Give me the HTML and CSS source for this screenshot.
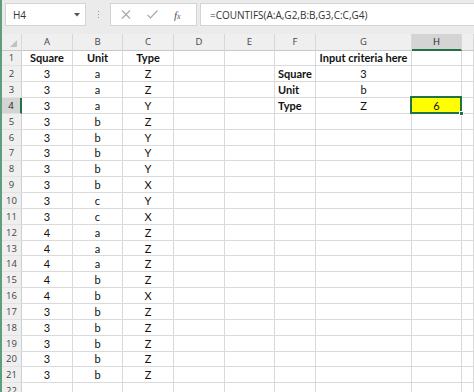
FILE: index.html
```html
<!DOCTYPE html>
<html lang="en">
<head>
  <meta charset="UTF-8" />
  <title>COUNTIFS</title>
  <link rel="stylesheet" href="styles.css">
</head>
<body>
  <div class="stripe"></div>
  <div class="app">
    <div class="formula-bar">
      <div class="name-box">
        <span>H4</span>
        <svg class="arrow" width="6" height="4" viewBox="0 0 6 4"><path d="M0 0h6L3 3.5z" fill="#555"/></svg>
      </div>
      <div class="dots"><i></i><i></i><i></i></div>
      <div class="fx-box">
        <svg width="10" height="9" viewBox="0 0 10 9"><path d="M1 0.5l8 8M9 0.5l-8 8" stroke="#a6a6a6" stroke-width="1.1" fill="none"/></svg>
        <svg width="11" height="9" viewBox="0 0 11 9"><path d="M0.5 4.8l3 3.2 7-7.5" stroke="#a6a6a6" stroke-width="1.1" fill="none"/></svg>
        <span class="fx">f<sub>x</sub></span>
      </div>
      <div class="formula">=COUNTIFS(A:A,G2,B:B,G3,C:C,G4)</div>
    </div>

    <table class="grid">
      <colgroup>
        <col style="width:20px"><col style="width:51px"><col style="width:50px"><col style="width:51px"><col style="width:51px">
        <col style="width:50px"><col style="width:41px"><col style="width:96px"><col style="width:50px"><col style="width:12px">
      </colgroup>
      <tr class="cols">
        <th class="corner"><span class="tri"></span></th><th>A</th><th>B</th><th>C</th><th>D</th><th>E</th><th>F</th><th>G</th><th class="on">H</th><th></th>
      </tr>
      <tr><th>1</th><td class="b">Square</td><td class="b">Unit</td><td class="b">Type</td><td></td><td></td><td></td><td class="b">Input criteria here</td><td></td><td></td></tr>
      <tr><th>2</th><td>3</td><td>a</td><td>Z</td><td></td><td></td><td class="b l">Square</td><td>3</td><td></td><td></td></tr>
      <tr><th>3</th><td>3</td><td>a</td><td>Z</td><td></td><td></td><td class="b l">Unit</td><td>b</td><td></td><td></td></tr>
      <tr><th class="on">4</th><td>3</td><td>a</td><td>Y</td><td></td><td></td><td class="b l">Type</td><td>Z</td><td class="sel">6</td><td></td></tr>
      <tr><th>5</th><td>3</td><td>b</td><td>Z</td><td></td><td></td><td></td><td></td><td></td><td></td></tr>
      <tr><th>6</th><td>3</td><td>b</td><td>Y</td><td></td><td></td><td></td><td></td><td></td><td></td></tr>
      <tr><th>7</th><td>3</td><td>b</td><td>Y</td><td></td><td></td><td></td><td></td><td></td><td></td></tr>
      <tr><th>8</th><td>3</td><td>b</td><td>Y</td><td></td><td></td><td></td><td></td><td></td><td></td></tr>
      <tr><th>9</th><td>3</td><td>b</td><td>X</td><td></td><td></td><td></td><td></td><td></td><td></td></tr>
      <tr><th>10</th><td>3</td><td>c</td><td>Y</td><td></td><td></td><td></td><td></td><td></td><td></td></tr>
      <tr><th>11</th><td>3</td><td>c</td><td>X</td><td></td><td></td><td></td><td></td><td></td><td></td></tr>
      <tr><th>12</th><td>4</td><td>a</td><td>Z</td><td></td><td></td><td></td><td></td><td></td><td></td></tr>
      <tr><th>13</th><td>4</td><td>a</td><td>Z</td><td></td><td></td><td></td><td></td><td></td><td></td></tr>
      <tr><th>14</th><td>4</td><td>a</td><td>Z</td><td></td><td></td><td></td><td></td><td></td><td></td></tr>
      <tr><th>15</th><td>4</td><td>b</td><td>Z</td><td></td><td></td><td></td><td></td><td></td><td></td></tr>
      <tr><th>16</th><td>4</td><td>b</td><td>X</td><td></td><td></td><td></td><td></td><td></td><td></td></tr>
      <tr><th>17</th><td>3</td><td>b</td><td>Z</td><td></td><td></td><td></td><td></td><td></td><td></td></tr>
      <tr><th>18</th><td>3</td><td>b</td><td>Z</td><td></td><td></td><td></td><td></td><td></td><td></td></tr>
      <tr><th>19</th><td>3</td><td>b</td><td>Z</td><td></td><td></td><td></td><td></td><td></td><td></td></tr>
      <tr><th>20</th><td>3</td><td>b</td><td>Z</td><td></td><td></td><td></td><td></td><td></td><td></td></tr>
      <tr><th>21</th><td>3</td><td>b</td><td>Z</td><td></td><td></td><td></td><td></td><td></td><td></td></tr>
      <tr><th>22</th><td></td><td></td><td></td><td></td><td></td><td></td><td></td><td></td><td></td></tr>
    </table>
  </div>
</body>
</html>
```

FILE: styles.css
```css
body {
  margin: 0;
  display: flex;
  height: 392px;
  overflow: hidden;
  font-family: Lato, "Open Sans", sans-serif;
  background: #fff;
}
.stripe {
  width: 2px;
  flex: none;
  background: #5f9e7c;
}
.app {
  flex: 1;
  display: flex;
  flex-direction: column;
  min-width: 0;
}
.formula-bar {
  height: 34px;
  flex: none;
  display: flex;
  align-items: flex-start;
  padding-top: 3px;
  box-sizing: border-box;
  background: #ebebeb;
  font-family: "Open Sans", sans-serif;
  font-size: 10px;
  color: #333;
}
.name-box, .fx-box, .formula {
  height: 23px;
  box-sizing: border-box;
  background: #fff;
  border: 1px solid #d4d4d4;
  display: flex;
  align-items: center;
}
.name-box {
  width: 81px;
  margin-left: 3px;
  padding: 0 5px 0 7px;
  justify-content: space-between;
}
.dots {
  width: 24px;
  height: 23px;
  display: flex;
  flex-direction: column;
  align-items: center;
  justify-content: center;
  gap: 2px;
}
.dots i {
  width: 1px;
  height: 1px;
  background: #9a9a9a;
}
.fx-box {
  width: 87px;
  padding-left: 10px;
  gap: 16px;
}
.fx {
  font-family: "Liberation Serif", serif;
  font-style: italic;
  font-size: 11px;
  color: #555;
}
.fx sub {
  font-size: 8px;
  vertical-align: 0;
}
.formula {
  flex: 1;
  margin-left: 3px;
  padding-left: 9px;
  border-right: none;
}

.grid {
  table-layout: fixed;
  width: 472px;
  border-collapse: separate;
  border-spacing: 0;
  font-size: 11px;
  color: #111;
}
.grid tr { height: 15.85px; }
.grid tr.cols { height: 16.5px; }
.grid td, .grid th {
  padding: 0 3px;
  box-sizing: border-box;
  line-height: 13px;
  white-space: nowrap;
  vertical-align: middle;
  text-align: center;
}
.grid td {
  border-right: 1px solid #dadada;
  border-bottom: 1px solid #dadada;
}
.grid th {
  background: #efefef;
  font-family: "Open Sans", sans-serif;
  font-weight: normal;
  font-size: 9.5px;
  color: #444;
  border-right: 1px solid #cfcfcf;
  border-bottom: 1px solid #e2e2e2;
  padding: 0;
}
.grid tr.cols th {
  border-bottom: 1px solid #c8c8c8;
  border-right: 1px solid #d8d8d8;
}
.grid th.on {
  background: #d4d4d4;
  color: #222;
}
.grid tr.cols th.on {
  border-bottom: 2px solid #217346;
}
.grid tr:not(.cols) th.on {
  border-right: 2px solid #217346;
}
.corner {
  position: relative;
}
.tri {
  position: absolute;
  right: 4px;
  bottom: 3px;
  width: 0;
  height: 0;
  border-left: 7px solid transparent;
  border-bottom: 7px solid #c2c2c2;
}
.b { font-weight: bold; }
.grid td.l { text-align: left; }
.grid td.sel {
  position: relative;
  background: #ffff00;
}
.sel::after {
  content: "";
  position: absolute;
  left: -2px;
  top: -2px;
  right: -1px;
  bottom: -1px;
  border: 2px solid #217346;
}
.sel::before {
  content: "";
  position: absolute;
  right: -3px;
  bottom: -3px;
  width: 5px;
  height: 5px;
  background: #217346;
  border: 1px solid #fff;
  box-sizing: border-box;
  z-index: 1;
}
```
